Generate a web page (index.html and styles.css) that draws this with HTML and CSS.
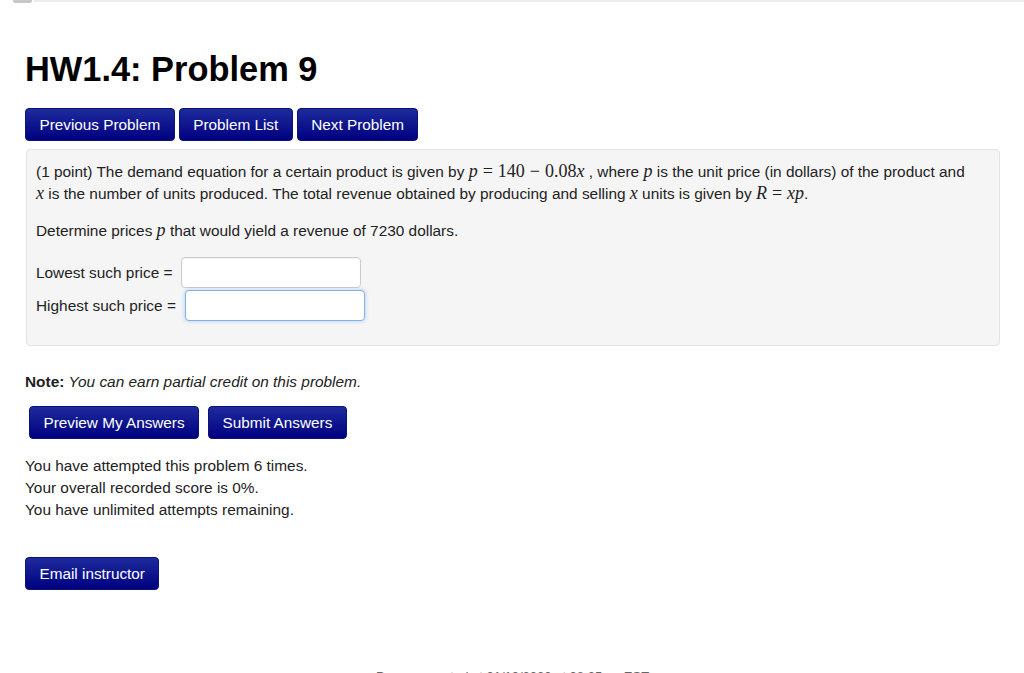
FILE: index.html
```html
<!DOCTYPE html>
<html lang="en">
<head>
  <meta charset="UTF-8" />
  <title>HW1.4: Problem 9</title>
  <link rel="stylesheet" href="styles.css">
</head>
<body>

  <div class="barra-top">
    <span class="pestana"></span>
    <span class="linea"></span>
  </div>

  <div class="pagina">
    <h1 class="titulo">HW1.4: Problem 9</h1>

    <div class="nav-botones">
      <button class="boton">Previous Problem</button>
      <button class="boton">Problem List</button>
      <button class="boton">Next Problem</button>
    </div>

    <div class="problema">
      <p>(1 point) The demand equation for a certain product is given by <span class="mate"><i>p</i><span class="op">=</span>140<span class="op">−</span>0.08<i>x</i></span> , where <span class="mate"><i>p</i></span> is the unit price (in dollars) of the product and <span class="mate"><i>x</i></span> is the number of units produced. The total revenue obtained by producing and selling <span class="mate"><i>x</i></span> units is given by <span class="mate"><i>R</i><span class="op">=</span><i>xp</i></span>.</p>

      <p>Determine prices <span class="mate"><i>p</i></span> that would yield a revenue of 7230 dollars.</p>

      <div class="respuestas">
        <label class="fila">Lowest such price = <input type="text" class="campo" /></label>
        <label class="fila">Highest such price = <input type="text" class="campo activo" /></label>
      </div>
    </div>

    <p class="nota"><b>Note:</b> <i>You can earn partial credit on this problem.</i></p>

    <div class="envio-botones">
      <button class="boton">Preview My Answers</button>
      <button class="boton">Submit Answers</button>
    </div>

    <div class="intentos">
      You have attempted this problem 6 times.<br>
      Your overall recorded score is 0%.<br>
      You have unlimited attempts remaining.
    </div>

    <button class="boton email">Email instructor</button>

    <div class="pie">Page generated at 01/19/2020 at 08:35pm EST</div>
  </div>

</body>
</html>
```

FILE: styles.css
```css
body {
  margin: 0;
  font-family: 'Liberation Sans', Arial, sans-serif;
  background-color: #ffffff;
  color: #222;
  font-size: 15.4px;
  overflow: hidden;
}

.barra-top {
  display: flex;
  gap: 2px;
  height: 3px;
  padding-left: 13px;
}

.pestana {
  width: 19px;
  height: 3px;
  background-color: #c8c8c8;
  border-radius: 0 0 2px 2px;
}

.linea {
  flex: 1;
  height: 2px;
  background-color: #ececec;
}

.pagina {
  padding-left: 25px;
  width: 974px;
}

.titulo {
  font-size: 34.4px;
  font-weight: bold;
  color: #000;
  margin: 46px 0 0 0;
  line-height: 40px;
}

.nav-botones {
  display: flex;
  gap: 4px;
  margin-top: 19px;
}

.boton {
  font-family: 'Liberation Sans', Arial, sans-serif;
  font-size: 15.3px;
  color: #fff;
  background-image: linear-gradient(#1d2b9c, #000080);
  background-color: #000080;
  border: 1px solid #0c1470;
  border-radius: 4px;
  height: 33px;
  padding: 0 13.5px;
  cursor: pointer;
}

.problema {
  margin-top: 8px;
  margin-left: 1px;
  margin-right: -1px;
  background-color: #f5f5f5;
  border: 1px solid #e3e3e3;
  border-radius: 4px;
  padding: 11px 33px 24px 9px;
  line-height: 22px;
}

.problema p {
  margin: 0 0 15px 0;
}

.mate {
  font-family: 'Liberation Serif', 'Times New Roman', serif;
  font-size: 18px;
  line-height: 1;
}

.op {
  margin: 0 5px;
}

.respuestas {
  display: flex;
  flex-direction: column;
  gap: 2px;
}

.fila {
  display: flex;
  align-items: center;
  gap: 9px;
}

.campo {
  width: 166px;
  height: 27px;
  border: 1px solid #ccc;
  border-radius: 4px;
  background: #fff;
  padding: 1px 6px;
  box-shadow: inset 0 1px 1px rgba(0,0,0,0.05);
}

.campo.activo {
  border-color: #7fb2ec;
  box-shadow: 0 0 4px rgba(82,148,230,0.45);
}

.nota {
  margin: 25px 0 0 0;
  line-height: 22px;
}

.envio-botones {
  display: flex;
  gap: 9px;
  margin: 13px 0 0 4px;
}

.intentos {
  margin-top: 16px;
  line-height: 22px;
}

.email {
  margin-top: 36px;
}

.pie {
  text-align: center;
  font-size: 13px;
  color: #666;
  margin-top: 79px;
  width: 975px;
}
```
